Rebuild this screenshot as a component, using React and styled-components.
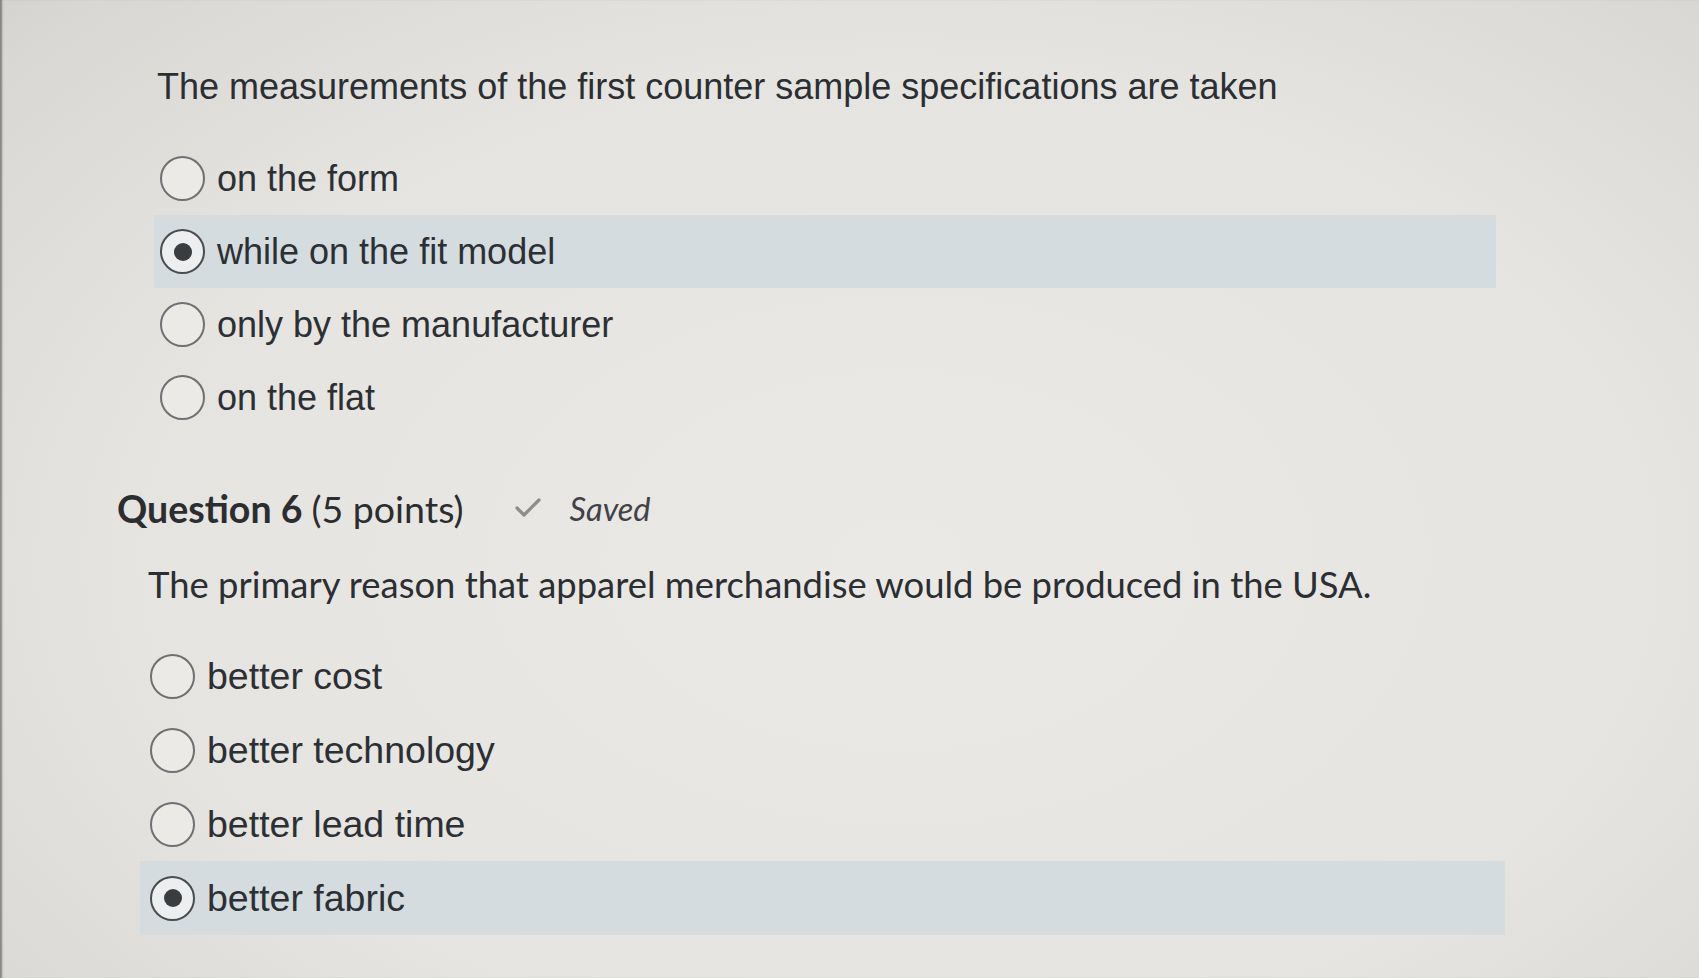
import React from "react"
import styled, { createGlobalStyle } from "styled-components"

const GlobalStyle = createGlobalStyle`
  html, body {
    margin: 0;
    padding: 0;
  }
  body {
    width: 1699px;
    height: 978px;
    overflow: hidden;
    background: radial-gradient(
        ellipse 1400px 900px at 900px 560px,
        #ebe9e5 0%,
        #e6e4e0 55%,
        #d8d7d4 85%,
        #c9c9c8 100%
      );
    box-shadow: inset 3px 0 2px -1px rgba(60, 60, 60, 0.55);
  }
`

const Page = styled.div`
  width: 1699px;
  height: 978px;
  box-sizing: border-box;
  padding-top: 65px;
  display: flex;
  flex-direction: column;
`

const QuestionBlock = styled.div`
  margin-left: ${p => p.$indent}px;
  width: ${p => p.$width}px;
  display: flex;
  flex-direction: column;
`

const Header = styled.div`
  margin-left: 117px;
  margin-top: 52px;
  margin-bottom: 32px;
  display: flex;
  align-items: center;
  height: 44px;
  font-family: Lato, "Noto Sans", sans-serif;
  font-size: 37.5px;
  color: #2b2d30;
  .title {
    font-weight: 700;
  }
  .points {
    font-weight: 400;
    margin-left: 9px;
  }
  .saved {
    display: flex;
    align-items: center;
    margin-left: 50px;
    font-style: italic;
    font-size: 32.5px;
    color: #3f4246;
    svg {
      margin-right: 28px;
    }
  }
`

const Prompt = styled.div`
  padding-left: ${p => p.$pad}px;
  height: 44px;
  line-height: 44px;
  font-family: ${p =>
    p.$lato
      ? 'Lato, "Noto Sans", sans-serif'
      : '"Liberation Sans", Arial, sans-serif'};
  font-size: ${p => p.$size}px;
  color: #2b2e32;
  white-space: nowrap;
  margin-bottom: 33px;
`

const Options = styled.div`
  display: flex;
  flex-direction: column;
`

const Option = styled.label`
  display: flex;
  align-items: center;
  height: ${p => p.$h}px;
  padding-left: ${p => p.$pad}px;
  background: ${p => (p.$selected ? "#d4dce0" : "transparent")};
  font-family: "Liberation Sans", Arial, sans-serif;
  font-size: ${p => p.$size}px;
  color: #2c3034;
  white-space: nowrap;
`

const Radio = styled.span`
  width: 45px;
  height: 45px;
  box-sizing: border-box;
  border-radius: 50%;
  border: 2.5px solid ${p => (p.$checked ? "#4a4d50" : "#6e7073")};
  background: ${p => (p.$checked ? "#eceeef" : "#ebeae7")};
  display: flex;
  align-items: center;
  justify-content: center;
  margin-right: 12px;
  flex-shrink: 0;
  &::after {
    content: "";
    width: 18px;
    height: 18px;
    border-radius: 50%;
    background: #3a3d40;
    display: ${p => (p.$checked ? "block" : "none")};
  }
`

const CheckIcon = () => (
  <svg width="28" height="22" viewBox="0 0 28 22">
    <polyline
      points="3,11 10,18 25,3"
      fill="none"
      stroke="#8c8d8e"
      strokeWidth="3.2"
      strokeLinecap="round"
      strokeLinejoin="round"
    />
  </svg>
)

const questions = [
  {
    indent: 154,
    width: 1342,
    prompt: "The measurements of the first counter sample specifications are taken",
    lato: false,
    promptPad: 3,
    promptSize: 36,
    optionPad: 6,
    optionSize: 36,
    rowHeight: 73,
    options: [
      "on the form",
      "while on the fit model",
      "only by the manufacturer",
      "on the flat",
    ],
    selected: 1,
  },
  {
    indent: 140,
    width: 1365,
    prompt:
      "The primary reason that apparel merchandise would be produced in the USA.",
    lato: true,
    promptPad: 8,
    promptSize: 36.4,
    optionPad: 10,
    optionSize: 37.5,
    rowHeight: 74,
    options: [
      "better cost",
      "better technology",
      "better lead time",
      "better fabric",
    ],
    selected: 3,
  },
]

function Question({ q }) {
  return (
    <QuestionBlock $indent={q.indent} $width={q.width}>
      <Prompt $pad={q.promptPad} $lato={q.lato} $size={q.promptSize}>
        {q.prompt}
      </Prompt>
      <Options>
        {q.options.map((opt, i) => (
          <Option
            key={opt}
            $selected={i === q.selected}
            $size={q.optionSize}
            $pad={q.optionPad}
            $h={q.rowHeight}
          >
            <Radio $checked={i === q.selected} />
            {opt}
          </Option>
        ))}
      </Options>
    </QuestionBlock>
  )
}

export default function App() {
  return (
    <>
      <GlobalStyle />
      <Page>
        <Question q={questions[0]} />
        <Header>
          <span className="title">Question 6</span>
          <span className="points">(5 points)</span>
          <span className="saved">
            <CheckIcon />
            Saved
          </span>
        </Header>
        <Question q={questions[1]} />
      </Page>
    </>
  )
}
